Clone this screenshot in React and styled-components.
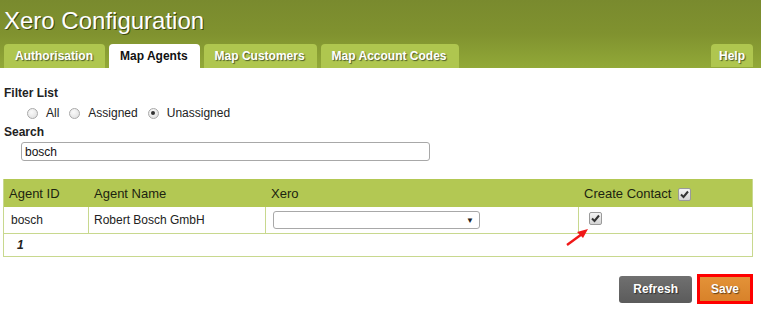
import React from "react";
import styled, { createGlobalStyle } from "styled-components";

const Global = createGlobalStyle`
  body {
    margin: 0;
    background: #fff;
    font-family: "Liberation Sans", Arial, sans-serif;
    font-size: 12px;
    color: #222;
  }
`;

const Header = styled.div`
  height: 68px;
  background: linear-gradient(to bottom, #798a2e 0%, #80922f 50%, #92a938 100%);
  display: flex;
  flex-direction: column;
  justify-content: space-between;
`;

const Title = styled.h1`
  margin: 0;
  padding: 6px 0 0 4px;
  font-size: 24px;
  line-height: 30px;
  font-weight: normal;
  color: #fff;
  text-shadow: 1px 1px 0 #3d4a12;
`;

const TabBar = styled.div`
  display: flex;
  align-items: flex-end;
  gap: 4px;
  padding: 0 8px 0 4px;
`;

const Tab = styled.div`
  height: 24px;
  padding: 0 12px 0 11px;
  display: flex;
  align-items: center;
  border-radius: 4px 4px 0 0;
  font-weight: bold;
  font-size: 12px;
  background: ${(p) => (p.active ? "#fff" : "#afc64f")};
  color: ${(p) => (p.active ? "#111" : "#fff")};
  text-shadow: ${(p) => (p.active ? "none" : "1px 1px 1px #4a5a28")};
  margin-left: ${(p) => (p.right ? "auto" : "0")};
  ${(p) => p.right && "padding: 0 8px; height: 23px; margin-bottom: 1px;"}
`;

const Content = styled.div`
  padding: 18px 8px 0 3px;
`;

const Label = styled.div`
  font-weight: bold;
  line-height: 14px;
  padding-left: 1px;
`;

const RadioRow = styled.div`
  display: flex;
  align-items: center;
  padding: 6px 0 5px 24px;
  line-height: 14px;
`;

const RadioItem = styled.label`
  display: flex;
  align-items: center;
  gap: 8px;
  margin-right: 10px;
`;

const Radio = styled.span`
  width: 9px;
  height: 9px;
  border-radius: 50%;
  border: 1px solid #a9a9a9;
  background: radial-gradient(circle at 40% 35%, #fafafa, #dcdcdc);
  display: flex;
  align-items: center;
  justify-content: center;
  &::after {
    content: "";
    width: 4px;
    height: 4px;
    border-radius: 50%;
    background: ${(p) => (p.checked ? "#333" : "transparent")};
  }
`;

const SearchInput = styled.div`
  margin: 3px 0 0 18px;
  width: 404px;
  height: 17px;
  border: 1px solid #a8a8a8;
  border-radius: 3px;
  padding-left: 3px;
  display: flex;
  align-items: center;
  color: #111;
`;

const TableWrap = styled.div`
  position: relative;
  margin-top: 18px;
`;

const Table = styled.div`
  display: grid;
  grid-template-columns: 85px 177px 313px 1fr;
  border: 1px solid #c8d88e;
  border-top: none;
`;

const HeadCell = styled.div`
  background: #b3c853;
  height: 28px;
  padding-left: ${(p) => p.pad || 5}px;
  display: flex;
  align-items: ${(p) => (p.low ? "flex-end" : "center")};
  padding-bottom: ${(p) => (p.low ? "6px" : "0")};
  box-sizing: border-box;
  font-size: 13px;
  color: #1c2410;
`;

const Cell = styled.div`
  height: 27px;
  padding-left: ${(p) => p.pad || 7}px;
  display: flex;
  align-items: center;
  border-right: ${(p) => (p.last ? "none" : "1px solid #c8d88e")};
  border-bottom: 1px solid #c8d88e;
  box-sizing: border-box;
`;

const FooterCell = styled.div`
  grid-column: 1 / -1;
  height: 22px;
  padding-left: 13px;
  display: flex;
  align-items: center;
  font-weight: bold;
  font-style: italic;
`;

const Select = styled.div`
  width: 200px;
  height: 16px;
  border: 1px solid #a8a8a8;
  border-radius: 3px;
  display: flex;
  align-items: center;
  justify-content: flex-end;
  padding-right: 5px;
  box-sizing: content-box;
  font-size: 8px;
  color: #222;
`;

const Check = styled.span`
  width: 11px;
  height: 11px;
  border: 1px solid #9a9a9a;
  border-radius: 2px;
  background: linear-gradient(to bottom, #f4f4f4, #d4d4d4);
  display: inline-flex;
  align-items: center;
  justify-content: center;
  margin-left: ${(p) => p.ml || 0}px;
  margin-top: ${(p) => p.mt || 0}px;
`;

const Arrow = styled.svg`
  position: absolute;
  left: 559px;
  top: 46px;
`;

const Actions = styled.div`
  display: flex;
  justify-content: flex-end;
  align-items: center;
  gap: 5px;
  margin-top: 17px;
`;

const Button = styled.div`
  height: ${(p) => (p.outlined ? 24 : 27)}px;
  padding: 0 ${(p) => (p.outlined ? 11 : 14)}px;
  display: flex;
  align-items: center;
  font-weight: bold;
  font-size: 12px;
  color: #fff;
  text-shadow: 1px 1px 1px rgba(0, 0, 0, 0.55);
  background: ${(p) =>
    p.orange
      ? "linear-gradient(to bottom, #e39238, #d8822a)"
      : "linear-gradient(to bottom, #707070, #5b5b5b)"};
  border: ${(p) => (p.outlined ? "3px solid #f00" : "none")};
  border-radius: ${(p) => (p.outlined ? "0" : "3px")};
`;

const Tick = () => (
  <svg width="9" height="9" viewBox="0 0 9 9">
    <path d="M1 4.5 L3.5 7 L8 1.5" stroke="#333" strokeWidth="2" fill="none" />
  </svg>
);

export default function App() {
  return (
    <>
      <Global />
      <Header>
        <Title>Xero Configuration</Title>
        <TabBar>
          <Tab>Authorisation</Tab>
          <Tab active>Map Agents</Tab>
          <Tab>Map Customers</Tab>
          <Tab>Map Account Codes</Tab>
          <Tab right>Help</Tab>
        </TabBar>
      </Header>
      <Content>
        <Label>Filter List</Label>
        <RadioRow>
          <RadioItem>
            <Radio />
            All
          </RadioItem>
          <RadioItem>
            <Radio />
            Assigned
          </RadioItem>
          <RadioItem>
            <Radio checked />
            Unassigned
          </RadioItem>
        </RadioRow>
        <Label>Search</Label>
        <SearchInput>bosch</SearchInput>
        <TableWrap>
          <Table>
            <HeadCell>Agent ID</HeadCell>
            <HeadCell>Agent Name</HeadCell>
            <HeadCell>Xero</HeadCell>
            <HeadCell low>
              Create Contact
              <Check ml={7} mt={-4}>
                <Tick />
              </Check>
            </HeadCell>
            <Cell>bosch</Cell>
            <Cell pad={5}>Robert Bosch GmbH</Cell>
            <Cell>
              <Select>▼</Select>
            </Cell>
            <Cell last pad={10}>
              <Check mt={-3}>
                <Tick />
              </Check>
            </Cell>
            <FooterCell>1</FooterCell>
          </Table>
          <Arrow width="30" height="24" viewBox="0 0 30 24">
            <line x1="5" y1="20" x2="20" y2="9" stroke="#f01818" strokeWidth="2.4" />
            <polygon points="26,4 15,7 21,13" fill="#f01818" />
          </Arrow>
        </TableWrap>
        <Actions>
          <Button>Refresh</Button>
          <Button orange outlined>Save</Button>
        </Actions>
      </Content>
    </>
  );
}
